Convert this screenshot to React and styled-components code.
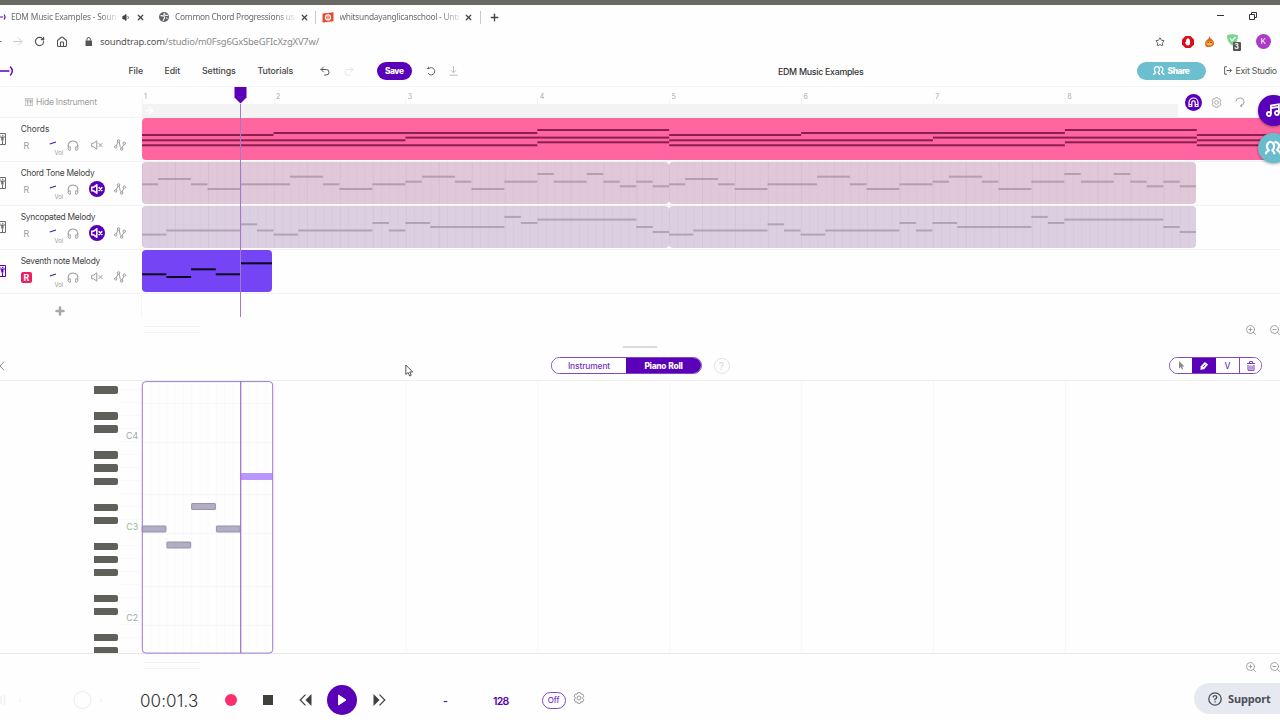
import styled, { createGlobalStyle } from 'styled-components';
import { Home, RotateCw, Volume1, Undo2, Redo2, ZoomIn, ZoomOut, Star, ArrowRight, X, Plus } from 'lucide-react';

const BAR = 131.9;
const PURPLE = '#5a00b8';

const GlobalStyle = createGlobalStyle`
    * {
        box-sizing: border-box;
    }

    body {
        margin: 0;
        background: #fefefe;
        overflow: hidden;
        font-family: Inter, "Liberation Sans", sans-serif;
        color: #3c3c3c;
    }

    svg {
        display: block;
        flex-shrink: 0;
    }
`;

const Page = styled.div`
    position: relative;
    width: 1280px;
    height: 720px;
    overflow: hidden;
    display: flex;
    flex-direction: column;
    background: #fefefe;
`;

const TopStrip = styled.div`
    height: 5px;
    flex-shrink: 0;
    background: #686963;
`;

/* browser chrome */

const TabBar = styled.div`
    display: flex;
    align-items: center;
    height: 24px;
    flex-shrink: 0;
    font-family: "Noto Sans", sans-serif;
    color: #444;
`;

const Cell = styled.div`
    display: flex;
    align-items: center;
    justify-content: ${({ $start }) => ($start ? 'flex-start' : 'center')};
    width: ${({ $w }) => $w}px;
    flex-shrink: 0;
`;

const TabTitle = styled.div`
    width: ${({ $w }) => $w}px;
    flex-shrink: 0;
    overflow: hidden;
    white-space: nowrap;
    font-size: 8.4px;
    line-height: 14px;
    letter-spacing: ${({ $ls }) => $ls || 0}px;
    color: #6c6c6c;
    mask-image: linear-gradient(to right, #000 84%, rgb(0 0 0 / 15%));
`;

const TabDivider = styled.div`
    width: 1px;
    height: 13px;
    background: #c9c9c9;
`;

const WindowButtons = styled.div`
    display: flex;
    align-items: center;
    gap: 25px;
    margin-left: auto;
    padding: 0 23.5px 3px 0;
`;

const AddressBar = styled.div`
    display: flex;
    align-items: center;
    height: 26px;
    flex-shrink: 0;
    padding-bottom: 1px;
    color: #555;
`;

const Url = styled.div`
    font-family: "Noto Sans", sans-serif;
    font-size: 9.4px;
    line-height: 14px;
    letter-spacing: -0.17px;
    color: #8a8a8a;
    margin-left: 5px;

    span {
        color: #555;
    }
`;

const Extensions = styled.div`
    display: flex;
    align-items: center;
    margin-left: auto;
    padding-right: 9.4px;
`;

const Avatar = styled.div`
    width: 15px;
    height: 15px;
    border-radius: 50%;
    background: #ab3ac6;
    color: white;
    font-size: 8px;
    line-height: 15px;
    text-align: center;
`;

const ShieldBox = styled.div`
    position: relative;
    width: 14px;
    height: 15px;

    span {
        position: absolute;
        right: 0;
        bottom: -2px;
        width: 8px;
        height: 9px;
        border-radius: 1px;
        background: #555;
        color: white;
        font-size: 7px;
        line-height: 9px;
        font-weight: 700;
        text-align: center;
    }
`;

/* studio menu */

const MenuBar = styled.div`
    display: flex;
    align-items: center;
    height: 32px;
    flex-shrink: 0;
    border-bottom: 1px solid #f4f4f4;
    font-size: 9px;
`;

const MenuItem = styled.div`
    width: ${({ $w }) => $w}px;
    flex-shrink: 0;
    font-weight: 500;
    font-size: 8.8px;
    letter-spacing: -0.07px;
    white-space: nowrap;
    color: #444;
`;

const Pill = styled.div`
    display: flex;
    align-items: center;
    justify-content: center;
    column-gap: 3px;
    width: ${({ $w }) => $w}px;
    height: 18px;
    flex-shrink: 0;
    border-radius: 9px;
    background: ${({ $bg }) => $bg};
    color: white;
    font-size: 8.4px;
    font-weight: 800;
    letter-spacing: -0.45px;
`;

const SongTitle = styled.div`
    width: 86px;
    margin-left: 320.5px;
    padding-top: 2px;
    font-size: 8.8px;
    font-weight: 500;
    white-space: nowrap;
    letter-spacing: -0.27px;
    color: #333;
`;

const ExitStudio = styled.div`
    display: flex;
    align-items: center;
    column-gap: 4px;
    margin-left: 18px;
    font-size: 8.8px;
    letter-spacing: -0.25px;
    white-space: nowrap;
    color: #555;
`;

/* arrangement */

const RulerRow = styled.div`
    display: flex;
    height: 31px;
    flex-shrink: 0;
    border-bottom: 1px solid #f3f3f3;
`;

const HideInstrument = styled.div`
    display: flex;
    align-items: center;
    column-gap: 3px;
    width: 141.7px;
    flex-shrink: 0;
    padding-left: 25px;
    font-size: 8.6px;
    letter-spacing: -0.26px;
    white-space: nowrap;
    color: #a0a0a0;
`;

const Ruler = styled.div`
    width: 1036.3px;
    flex-shrink: 0;
    overflow: hidden;
`;

const RulerNumbers = styled.div`
    display: flex;
    height: 17px;
`;

const RulerNumber = styled.div`
    width: ${BAR}px;
    flex-shrink: 0;
    padding: 5px 0 0 2.3px;
    font-size: 7px;
    line-height: 10px;
    color: #a9a9a9;
    background: linear-gradient(#f4f4f4, #f4f4f4) 0 100% / 1px 6px no-repeat;
`;

const LoopStrip = styled.div`
    display: flex;
    align-items: center;
    height: 13px;
    padding-left: 2px;
    background: #f3f3f3;
    color: white;
`;

const RulerTools = styled.div`
    display: flex;
    align-items: center;
    padding-left: 4px;
    color: #a5a5a5;
`;

const RoundIcon = styled.div`
    display: flex;
    align-items: center;
    justify-content: center;
    width: ${({ $size }) => $size}px;
    height: ${({ $size }) => $size}px;
    flex-shrink: 0;
    border-radius: 50%;
    background: ${({ $bg }) => $bg || PURPLE};
    color: white;
`;

const Tracks = styled.div`
    display: flex;
    flex-direction: column;
    flex-shrink: 0;
`;

const TrackRow = styled.div`
    display: flex;
    height: 44px;
    border-bottom: 1px solid #f3f3f3;
`;

const TrackHead = styled.div`
    display: flex;
    width: 141.7px;
    flex-shrink: 0;
    color: ${({ $active }) => ($active ? PURPLE : '#6d6d6d')};

    .keys {
        margin: 15px 0 0 -6px;
    }
`;

const TrackBody = styled.div`
    padding: 5px 0 0 8.7px;
`;

const TrackName = styled.div`
    padding-left: 6px;
    font-size: 8.4px;
    line-height: 12px;
    letter-spacing: ${({ $ls }) => $ls}px;
    color: #444;
    white-space: nowrap;
`;

const TrackControls = styled.div`
    display: flex;
    align-items: center;
    height: 20px;
    color: #9a9a9a;
`;

const RecordArm = styled.div`
    width: 11px;
    height: 11px;
    border-radius: 2px;
    font-size: 8.8px;
    line-height: 11px;
    text-align: center;
    font-weight: ${({ $on }) => ($on ? 700 : 400)};
    color: ${({ $on }) => ($on ? 'white' : '#9a9a9a')};
    background: ${({ $on }) => ($on ? '#ea1f60' : 'none')};
`;

const Volume = styled.div`
    display: flex;
    flex-direction: column;
    align-items: flex-end;
    width: 23.5px;
    font-size: 5.8px;
    line-height: 6px;
    color: #999;
    padding-top: 7px;

    span {
        margin: 4.5px -1.5px 0 0;
    }

    svg {
        margin-right: 5px;
    }
`;

const Lane = styled.div`
    display: flex;
    flex: 1;
    min-width: 0;
    overflow: hidden;
`;

const Clip = styled.div`
    width: ${({ $bars }) => $bars * BAR}px;
    height: 42px;
    flex-shrink: 0;
    border-radius: 4px;
    overflow: hidden;
    background: ${({ $bg }) => $bg};
`;

const AddRow = styled.div`
    display: flex;
    height: 24px;
    flex-shrink: 0;
`;

const AddTrack = styled.div`
    display: flex;
    justify-content: center;
    align-items: center;
    width: 142px;
    padding: 9px 20.5px 0 0;
    border-right: 1px solid #f5f5f5;
    color: #a8a8a8;
`;

const ScrollRow = styled.div`
    display: flex;
    align-items: center;
    height: ${({ $h }) => $h}px;
    flex-shrink: 0;
    padding-left: 144px;
    color: #9a9a9a;
`;

const ScrollThumb = styled.div`
    width: 56px;
    height: 7px;
    margin-bottom: 2px;
    border: 1px solid #f3f3f3;
    border-width: 1px 0;
`;

const ZoomGroup = styled.div`
    display: flex;
    column-gap: 12px;
    margin-left: auto;
    margin-right: -1px;
`;

const Playhead = styled.div`
    position: absolute;
    left: 234.2px;
    top: 87px;
    width: 13px;
    height: 231px;

    .line {
        width: 1.4px;
        height: 213px;
        margin: -0.5px auto 0;
        background: #a27acb;
    }
`;

const Floating = styled.div`
    position: absolute;
    left: 1258px;
    top: 95px;
    display: flex;
    flex-direction: column;
    row-gap: 7px;
`;

const FloatButton = styled(RoundIcon)`
    box-shadow: 0 1px 3px rgb(0 0 0 / 35%);
`;

/* editor */

const HandleRow = styled.div`
    display: flex;
    justify-content: center;
    height: 14px;
    flex-shrink: 0;
    padding-top: 4px;

    div {
        width: 34px;
        height: 2px;
        background: #dadada;
    }
`;

const EditorBar = styled.div`
    display: flex;
    align-items: center;
    height: 25px;
    flex-shrink: 0;
    padding-bottom: 5px;
    border-bottom: 1px solid #eeeeee;
`;

const Segmented = styled.div`
    display: flex;
    height: 17px;
    margin-left: ${({ $ml }) => $ml}px;
    border: 1px solid #8047c0;
    border-radius: 9px;
    overflow: hidden;
`;

const Segment = styled.div`
    display: flex;
    align-items: center;
    justify-content: center;
    width: ${({ $w }) => $w}px;
    font-size: 8.4px;
    letter-spacing: ${({ $on }) => ($on ? -0.3 : -0.1)}px;
    word-spacing: ${({ $on }) => ($on ? 0.6 : 0)}px;
    font-weight: ${({ $on }) => ($on ? 800 : 500)};
    color: ${({ $on }) => ($on ? 'white' : '#7234ba')};
    background: ${({ $on }) => ($on ? PURPLE : 'white')};
    border-left: ${({ $line }) => ($line ? '1px solid #8047c0' : 0)};
`;

const HelpMark = styled.div`
    width: 16px;
    height: 16px;
    margin-left: 11.5px;
    border: 1px solid #e3e3e3;
    border-radius: 50%;
    font-size: 10px;
    line-height: 14px;
    text-align: center;
    color: #d9d9d9;
`;

const PianoRoll = styled.div`
    display: flex;
    height: 273px;
    flex-shrink: 0;
    padding-left: 94px;
    border-bottom: 1px solid #e8e8e8;
`;

const BlackKeys = styled.div`
    display: flex;
    flex-direction: column;
    width: 23.5px;
    padding-top: 2.8px;
    overflow: hidden;
`;

const KeySlot = styled.div`
    height: 13.03px;
    padding: 2.6px 0;
    flex-shrink: 0;

    &::before {
        content: '';
        display: ${({ $black }) => ($black ? 'block' : 'none')};
        height: 7.8px;
        border-radius: 0 2px 2px 0;
        background: #60605b;
    }
`;

const OctaveLabels = styled.div`
    width: 24.2px;
    padding-top: 9.6px;
    overflow: hidden;
    background: repeating-linear-gradient(#0000 0 8px, #f9f9f7 8px 9px, #0000 9px 13.03px);
`;

const OctaveLabel = styled.div`
    height: 91.3px;
    padding-right: 3.7px;
    text-align: right;
    font-size: 8.7px;
    line-height: 91.3px;
    color: ${({ $on }) => ($on ? '#8cc08c' : '#a5a5a5')};
`;

const RollGrid = styled.div`
    flex: 1;
    min-width: 0;
`;

/* transport */

const Transport = styled.div`
    display: flex;
    align-items: center;
    height: 42px;
    flex-shrink: 0;
    color: #3f3f3f;
`;

const Time = styled.div`
    width: 74px;
    padding-top: 1px;
    font-size: 17px;
    font-weight: 300;
    letter-spacing: 0.1px;
    color: #333;
`;

const Tempo = styled.div`
    padding-top: 2px;
    font-size: 10.5px;
    font-weight: 600;
    letter-spacing: -0.75px;
    color: ${PURPLE};
`;

const OffPill = styled.div`
    width: 24px;
    height: 17px;
    border: 1px solid #8047c0;
    border-radius: 9px;
    font-size: 8px;
    line-height: 15px;
    text-align: center;
    color: ${PURPLE};
`;

const Support = styled.div`
    position: absolute;
    left: 1194px;
    top: 683px;
    display: flex;
    align-items: center;
    column-gap: 6px;
    width: 100px;
    height: 31px;
    padding-left: 14px;
    border-radius: 16px;
    background: #e7e9f1;
    color: #4b4d58;
    font-family: "Noto Sans", sans-serif;
    font-size: 11px;
    font-weight: 700;
    letter-spacing: -0.15px;
`;

const Cursor = styled.svg`
    position: absolute;
    left: 405px;
    top: 364px;
`;

/* notes are [start, end, y], in steps of the clip */

const CHORDS = [
    [0, 1, 17], [1, 3, 15], [3, 4, 12],
    [0, 2, 22.3], [2, 4, 19.6],
    [0, 3, 27.3], [3, 4, 24.3],
];
const CHORD_NOTES = [
    ...CHORDS,
    ...CHORDS.map(([a, b, y]) => [a + 4, b + 4, y]),
    [8, 9, 17], [8, 9, 22.3], [8, 9, 27.3],
];

const MELODY_NOTES = [
    [0, 1, 22.3], [1, 3, 17], [3, 4, 22.3], [4, 6, 27], [6, 9, 22.3], [9, 11, 14.7], [11, 12, 22.3], [12, 14, 27],
    [14, 16, 22.3], [16, 17, 19.7], [17, 19, 14.7], [19, 20, 19.7], [20, 22, 27], [22, 24, 19.7], [24, 25, 12],
    [25, 27, 19.7], [27, 28, 12], [28, 29, 19.7], [29, 30, 24.3], [30, 31, 19.7], [31, 32, 24.3],
];

const SYNCOPATED_NOTES = [
    [0, 3, 28.6], [3, 12, 24.5], [12, 14, 18.3], [14, 16, 24.5], [16, 19, 28.6], [19, 28, 24.5], [28, 30, 17],
    [30, 32, 24.5], [32, 35, 17], [35, 44, 21], [44, 46, 10.9], [46, 48, 17], [48, 60, 13.6], [60, 62, 21], [62, 64, 26],
];

const SEVENTH_NOTES = [[0, 3, 24.3], [3, 6, 27], [6, 9, 19.3], [9, 12, 24.3], [12, 16, 13.3]];

const ROLL_NOTES = [[0, 3, 145], [3, 6, 161], [6, 9, 122.5], [9, 12, 145]];

const TRACKS = [
    {
        name: 'Chords',
        ls: 0,
        clips: [{ bars: 9, bg: '#ff669f', notes: CHORD_NOTES, steps: 1, color: '#8a1f50' }],
    },
    {
        name: 'Chord Tone Melody',
        ls: -0.25,
        muted: true,
        clips: [4, 3.99].map((bars) => ({ bars, bg: '#e1c8d9', notes: MELODY_NOTES, steps: 8, color: '#b3a0ae', grid: true })),
    },
    {
        name: 'Syncopated Melody',
        ls: -0.27,
        muted: true,
        clips: [4, 3.99].map((bars) => ({ bars, bg: '#ddcfe2', notes: SYNCOPATED_NOTES, steps: 16, color: '#b0a4b6', grid: true })),
    },
    {
        name: 'Seventh note Melody',
        ls: -0.23,
        active: true,
        clips: [{ bars: 0.988, bg: '#7444f5', notes: SEVENTH_NOTES, steps: 16, color: '#0d0620' }],
    },
];

const BLACK_KEYS = '101101110110111011011'.split('');

const range = (n) => Array.from({ length: n }, (_, i) => i);

const ClipNotes = ({ bars, notes, steps, color, grid }) => (
    <svg width={bars * BAR} height="42">
        {grid && range(64).map((i) => (
            <rect key={i} x={(i * BAR) / 16} y="0" width="1" height="42" fill="#6d4a7c" opacity={i % 4 === 0 ? 0.07 : 0.03} />
        ))}
        {notes.map(([a, b, y], i) => (
            <rect key={i} x={(a * BAR) / steps - 0.4} y={y - 1} width={((b - a) * BAR) / steps} height="2" fill={color} />
        ))}
    </svg>
);

const KeysIcon = ({ size = 12, className }) => (
    <svg className={className} width={size} height={size} viewBox="0 0 12 12" fill="none" stroke="currentColor" strokeWidth="1">
        <path d="M.5 .5h11v11H.5zM.5 4h11M2 2.300h1.500M5 2.300h1.500M8 2.300h1.500M4 7.500V11M8.500 7.500V11" />
        <path d="M3.200 4h1.700v4H3.200zM7.200 4h2.300v3.600H7.200z" fill="currentColor" stroke="none" />
    </svg>
);

const MuteIcon = ({ bold }) => (
    <svg width="12" height="10" viewBox="0 0 12 10" fill="none" stroke="currentColor" strokeWidth={bold ? 1.6 : 1} strokeLinejoin="round">
        <path d="M.7 3.2h2L5.8.8v8.4L2.7 6.8h-2zM7.6 3.2l3.7 3.7M11.3 3.2L7.6 6.9" />
    </svg>
);

const HeadphonesIcon = () => (
    <svg width="12" height="11" viewBox="0 0 12 11" fill="none" stroke="currentColor" strokeWidth="1.100">
        <path d="M1.300 7.500C.6 3.500 2.500 1 6 1s5.400 2.500 4.700 6.500" />
        <path d="M3.300 6.800v3.400H2.100L1 8.800l.4-1.600zM8.700 6.800v3.400h1.200L11 8.800l-.4-1.600z" strokeWidth="0.900" />
    </svg>
);

const AutomationIcon = () => (
    <svg width="12" height="12" viewBox="0 0 12 12" fill="none" stroke="currentColor" strokeWidth="1">
        <path d="M2.300 6.800L4 3M5.200 3l1 4.600q.5 1.200 1.200 1M8.100 8.900l1.700-3.600" />
        <circle cx="1.700" cy="7.800" r="1.200" />
        <circle cx="4.600" cy="1.900" r="1.200" />
        <circle cx="7.700" cy="10" r="1.200" />
        <circle cx="10.300" cy="4.200" r="1.200" />
    </svg>
);

const GearIcon = ({ size = 11 }) => (
    <svg width={size} height={size} viewBox="0 0 12 12" fill="none" stroke="currentColor" strokeWidth="1">
        <path d="M4.700 .7h2.600l.6 1.500 1.600-.2 1.300 2.200-1 1.300v1l1 1.300-1.300 2.200-1.600-.2-.6 1.500H4.700l-.6-1.500-1.600.2L1.200 7.800l1-1.300v-1l-1-1.300L2.500 2l1.600.2z" />
        <circle cx="6" cy="6" r="2" />
    </svg>
);

const PeopleIcon = ({ size = 12, stroke = 1.5 }) => (
    <svg width={size} height={size * 0.8} viewBox="0 0 15 12" fill="none" stroke="currentColor" strokeWidth={stroke} strokeLinejoin="round">
        <path d="M.9 11.600V10.300L3.400 8.200C.8 6 1.500 .9 4.900 .9s4.100 5.100 1.500 7.300l1.800 2.100v1.300" />
        <path d="M8.300 1.300c3.600-1.500 5.600 3.500 2.400 6.500l2.900 2.500v1.300" />
    </svg>
);

const LogoMark = () => (
    <svg width="14" height="12" viewBox="0 0 14 12" fill="none" stroke={PURPLE} strokeWidth="1.400" strokeLinecap="round">
        <path d="M0 6h9M10.500 2c2.200 2.400 2.200 5.600 0 8" />
    </svg>
);

const Track = ({ name, ls, muted, active, clips }) => (
    <TrackRow>
        <TrackHead $active={active}>
            <KeysIcon className='keys' />
            <TrackBody>
                <TrackName $ls={ls}>{name}</TrackName>
                <TrackControls>
                    <Cell $w={23.5}><RecordArm $on={active}>R</RecordArm></Cell>
                    <Volume>
                        <svg width="8" height="4" viewBox="0 0 8 4"><path d="M.8 3L7 1" stroke="#4a1c9c" strokeWidth="1.200" /></svg>
                        <span>Vol</span>
                    </Volume>
                    <Cell $w={23.5}><HeadphonesIcon /></Cell>
                    <Cell $w={23.5}>
                        {muted ? <RoundIcon $size={16}><MuteIcon bold /></RoundIcon> : <MuteIcon />}
                    </Cell>
                    <Cell $w={23.5}><AutomationIcon /></Cell>
                </TrackControls>
            </TrackBody>
        </TrackHead>
        <Lane>
            {clips.map((clip, i) => (
                <Clip key={i} $bars={clip.bars} $bg={clip.bg}>
                    <ClipNotes {...clip} />
                </Clip>
            ))}
        </Lane>
    </TrackRow>
);

const App = () => {
    return (
        <Page>
            <GlobalStyle />
            <TopStrip />

            <TabBar>
                <Cell $w={11} $start>
                    <svg width="6" height="8" viewBox="0 0 6 8" fill="none" stroke={PURPLE} strokeWidth="1.200"><path d="M0 4h3M4 1.500q2 2.500 0 5" /></svg>
                </Cell>
                <TabTitle $w={106} $ls={-0.2}>EDM Music Examples - Soun</TabTitle>
                <Cell $w={18}><Volume1 size={9} fill="currentColor" /></Cell>
                <Cell $w={10}><X size={9} strokeWidth={3.2} /></Cell>
                <Cell $w={30}>
                    <svg width="10" height="10" viewBox="0 0 10 10" style={{ marginLeft: 8 }}>
                        <circle cx="5" cy="5" r="5" fill="#5f6368" />
                        <path d="M1.500 3.600L5 4l.6 1.800L4 8.800M5.500 1l-.6 1.600 2.300.9 1.800-.3M7 6l1.600.3" fill="none" stroke="white" strokeWidth="1.100" />
                    </svg>
                </Cell>
                <TabTitle $w={120} $ls={-0.27}>Common Chord Progressions use</TabTitle>
                <Cell $w={19}><X size={9} strokeWidth={3.2} /></Cell>
                <Cell $w={1} />
                <TabDivider />
                <Cell $w={23.5}>
                    <svg width="12" height="11" viewBox="0 0 12 11">
                        <path d="M.5 1.500L11.500 .3v9L.5 10.500z" fill="#e8492f" />
                        <circle cx="6" cy="5.400" r="2.500" fill="none" stroke="white" strokeWidth="1.300" />
                        <path d="M6 4v3" stroke="white" />
                    </svg>
                </Cell>
                <TabTitle $w={120} $ls={-0.27}>whitsundayanglicanschool - Unti</TabTitle>
                <Cell $w={18}><X size={9} strokeWidth={3.2} /></Cell>
                <Cell $w={2} />
                <TabDivider />
                <Cell $w={28}><Plus size={11} strokeWidth={3} /></Cell>
                <WindowButtons>
                    <svg width="7" height="9"><path d="M0 4.500h7" stroke="#333" /></svg>
                    <svg width="8" height="8" fill="none" stroke="#333"><path d="M.5 2.500h5v5h-5zM2.500 2V.5h5v5H6" /></svg>
                </WindowButtons>
            </TabBar>

            <AddressBar>
                <Cell $w={29}>
                    <svg width="29" height="11"><path d="M0 5.500h1.500" stroke="#777" /><path d="M13 5.500h9M18 1.500l4 4-4 4" fill="none" stroke="#ccc" /></svg>
                </Cell>
                <Cell $w={21}><RotateCw size={11} strokeWidth={2.6} /></Cell>
                <Cell $w={24}><Home size={12} strokeWidth={2.2} /></Cell>
                <Cell $w={21}>
                    <svg width="11" height="9" viewBox="0 0 11 9" style={{ marginLeft: 8 }}>
                        <path d="M2.500 3.500h6.500V9H2.500z" fill="#555" />
                        <path d="M4 3.500V2.200a1.700 1.700 0 0 1 3.400 0v1.300" fill="none" stroke="#555" strokeWidth="1" />
                    </svg>
                </Cell>
                <Url><span>soundtrap.com</span>/studio/m0Fsg6GxSbeGFIcXzgXV7w/</Url>
                <Extensions>
                    <Cell $w={25}><Star size={10} strokeWidth={2.2} /></Cell>
                    <Cell $w={30}>
                        <svg width="12" height="12" viewBox="0 0 12 12">
                            <path d="M3.500 0h5L12 3.500v5L8.500 12h-5L0 8.500v-5z" fill="#d80f1e" />
                            <path d="M4 6V3.500h1V2.500h2v1h1V7q0 2.500-2 2.500T3 6.500z" fill="white" />
                        </svg>
                    </Cell>
                    <Cell $w={14}>
                        <svg width="9" height="11" viewBox="0 0 9 11">
                            <path d="M4.500 0Q5 2 7 3.500q2 1.500 2 4T4.500 11 0 7.500q0-2.500 2.500-4Q4.500 2 4.500 0z" fill="#e2611c" />
                            <path d="M1.500 5.500h6v3q-3 2-6 0z" fill="#f7b83c" />
                            <path d="M2.500 6.500h1.200M5.300 6.500h1.200" stroke="#4c2510" />
                        </svg>
                    </Cell>
                    <Cell $w={34}>
                        <ShieldBox>
                            <svg width="11" height="12" viewBox="0 0 11 12">
                                <path d="M0 1.200Q5.500-.8 11 1.200 11 8.500 5.500 11.500 0 8.500 0 1.200z" fill="#78d68a" />
                                <path d="M3 4l2 3 3.500-4" fill="none" stroke="white" strokeWidth="1.200" />
                            </svg>
                            <span>3</span>
                        </ShieldBox>
                    </Cell>
                    <Cell $w={5} />
                    <Avatar>K</Avatar>
                </Extensions>
            </AddressBar>

            <MenuBar>
                <Cell $w={128.5} $start><LogoMark /></Cell>
                <MenuItem $w={36}>File</MenuItem>
                <MenuItem $w={37.5}>Edit</MenuItem>
                <MenuItem $w={55.5}>Settings</MenuItem>
                <MenuItem $w={61}>Tutorials</MenuItem>
                <Cell $w={13}><Undo2 size={12} strokeWidth={2} color="#555" /></Cell>
                <Cell $w={34}><Redo2 size={12} strokeWidth={1.5} color="#ddd" /></Cell>
                <Cell $w={11.5} />
                <Pill $w={34.5} $bg={PURPLE}>Save</Pill>
                <Cell $w={38}>
                    <svg width="10" height="10" viewBox="0 0 10 10" fill="none" stroke="#666" strokeWidth="1">
                        <path d="M3 2.400A3.600 3.600 0 1 1 2 7M.8 2.400h2.400M2.500.8v2" />
                    </svg>
                </Cell>
                <Cell $w={8}>
                    <svg width="9" height="10" viewBox="0 0 9 10" fill="none" stroke="#bbb" strokeWidth="1">
                        <path d="M4.500 0v6.500M2 4.300l2.500 2.500L7 4.300M.5 9.200h8" />
                    </svg>
                </Cell>
                <SongTitle>EDM Music Examples</SongTitle>
                <Cell $w={272.5} />
                <Pill $w={69} $bg='#6bbfce'><PeopleIcon size={12} stroke={1.6} />Share</Pill>
                <ExitStudio>
                    <svg width="8" height="9" viewBox="0 0 8 9" fill="none" stroke="#666" strokeWidth="1">
                        <path d="M3 .8H.6v7.400H3M2.500 4.500h5M5.500 2.500l2 2-2 2" />
                    </svg>
                    Exit Studio
                </ExitStudio>
            </MenuBar>

            <RulerRow>
                <HideInstrument><KeysIcon size={8} />Hide Instrument</HideInstrument>
                <Ruler>
                    <RulerNumbers>
                        {range(8).map((i) => <RulerNumber key={i}>{i + 1}</RulerNumber>)}
                    </RulerNumbers>
                    <LoopStrip><ArrowRight size={11} strokeWidth={3} /></LoopStrip>
                </Ruler>
                <RulerTools>
                    <Cell $w={23}>
                        <RoundIcon $size={17}>
                            <svg width="11" height="11" viewBox="0 0 11 11" fill="none" stroke="white" strokeWidth="1.200">
                                <path d="M1 9.500V5.500a4.500 4.500 0 0 1 9 0v4H7.200V5.500a1.700 1.700 0 0 0-3.400 0v4zM1 7.500h2.800M7.200 7.500H10" />
                            </svg>
                        </RoundIcon>
                    </Cell>
                    <Cell $w={24}><GearIcon /></Cell>
                    <Cell $w={22}>
                        <svg width="10" height="10" viewBox="0 0 10 10" fill="none" stroke="currentColor" strokeWidth="1">
                            <path d="M1 4.500A4 4 0 1 1 5.500 8.800M7.300 7L5.300 8.800l2 1.200" />
                        </svg>
                    </Cell>
                </RulerTools>
            </RulerRow>

            <Tracks>
                {TRACKS.map((track) => <Track key={track.name} {...track} />)}
            </Tracks>

            <AddRow>
                <AddTrack><Plus size={12} strokeWidth={5} /></AddTrack>
            </AddRow>

            <ScrollRow $h={24}>
                <ScrollThumb />
                <ZoomGroup><ZoomIn size={12} strokeWidth={1.8} /><ZoomOut size={12} strokeWidth={1.8} /></ZoomGroup>
            </ScrollRow>

            <HandleRow><div /></HandleRow>

            <EditorBar>
                <Cell $w={6} $start>
                    <svg width="5" height="10" fill="none" stroke="#888"><path d="M4 .8L0 5l4 4.200" /></svg>
                </Cell>
                <Segmented $ml={545}>
                    <Segment $w={74}>Instrument</Segment>
                    <Segment $w={75} $on>Piano Roll</Segment>
                </Segmented>
                <HelpMark>?</HelpMark>
                <Segmented $ml={439.5}>
                    <Segment $w={22}>
                        <svg width="7" height="9" viewBox="0 0 7 9"><path d="M1 0v7.500l1.800-1.600L4 8.600l1.200-.5L4 5.500h2.500z" fill="#888" /></svg>
                    </Segment>
                    <Segment $w={24} $on>
                        <svg width="10" height="10" viewBox="0 0 10 10">
                            <path d="M1.300 8.800l.5-3.500L5.800 .9l3.300 2.500-4 4.800z" fill="white" />
                            <path d="M4.300 6l2-2.500" stroke={PURPLE} strokeWidth="0.900" />
                        </svg>
                    </Segment>
                    <Segment $w={23}>V</Segment>
                    <Segment $w={22} $line>
                        <svg width="8" height="10" viewBox="0 0 8 10" fill="none" stroke="currentColor" strokeWidth="1">
                            <path d="M0 2.500h8M2.500 2.300V.6h3v1.700M1 4v5.300h6V4M3 4.500v4M5 4.500v4" />
                        </svg>
                    </Segment>
                </Segmented>
            </EditorBar>

            <PianoRoll>
                <BlackKeys>
                    {BLACK_KEYS.map((k, i) => <KeySlot key={i} $black={k === '1'} />)}
                </BlackKeys>
                <OctaveLabels>
                    <OctaveLabel>C4</OctaveLabel>
                    <OctaveLabel $on>C3</OctaveLabel>
                    <OctaveLabel>C2</OctaveLabel>
                </OctaveLabels>
                <RollGrid>
                    <svg width="1138" height="273" viewBox="0.300 0 1138 273" overflow="visible">
                        {range(8).map((i) => <rect key={i} x={i * BAR} y="0" width="1" height="272" fill="#f7f7f7" />)}
                        {range(16).map((i) => <rect key={i} x={(i * BAR) / 16} y="0" width="1" height="272" fill="#fafafa" />)}
                        {[22, 61, 113, 152, 205, 244].map((y) => <rect key={y} x="0" y={y} width="131" height="1" fill="#f7f7f7" />)}
                        {ROLL_NOTES.map(([a, b, y], i) => (
                            <rect key={i} x={(a * BAR) / 16 + 0.5} y={y} width={((b - a) * BAR) / 16 - 1} height="6" rx="0.500" fill="#b2adc3" stroke="#9791aa" />
                        ))}
                        <rect x="99" y="92" width="32" height="7" fill="#b996fb" />
                        <rect x="0.600" y="0.600" width="130.400" height="271.500" rx="3.500" fill="none" stroke="#9c7bd0" strokeWidth="1" />
                        <path d="M99 0v272" stroke="#9b70c9" strokeWidth="1.200" />
                    </svg>
                </RollGrid>
            </PianoRoll>

            <ScrollRow $h={25}>
                <ScrollThumb />
                <ZoomGroup><ZoomIn size={12} strokeWidth={1.8} /><ZoomOut size={12} strokeWidth={1.8} /></ZoomGroup>
            </ScrollRow>

            <Transport>
                <Cell $w={140} $start>
                    <svg width="110" height="20" fill="none" stroke="#ebebeb">
                        <path d="M1 6v8M4 5q2 5 0 10M20 9v3M101 9v3" />
                        <circle cx="82.500" cy="10" r="8.500" />
                    </svg>
                </Cell>
                <Time>00:01.3</Time>
                <Cell $w={34}><RoundIcon $size={12.5} $bg='#fb2f6b' /></Cell>
                <Cell $w={40}><svg width="10" height="10"><rect width="10" height="10" fill="#3f403c" /></svg></Cell>
                <Cell $w={35}>
                    <svg width="13" height="12" viewBox="0 0 13 12"><path d="M12.500 0v12L6.500 6z" fill="#3f403c" /><path d="M6.500 .6L1.200 6l5.300 5.400" fill="none" stroke="#3f403c" strokeWidth="1.200" /></svg>
                </Cell>
                <Cell $w={38}>
                    <RoundIcon $size={30}>
                        <svg width="10" height="12" viewBox="0 0 10 12"><path d="M1.500 1l7.500 5-7.500 5z" fill="white" stroke="white" strokeLinejoin="round" /></svg>
                    </RoundIcon>
                </Cell>
                <Cell $w={36}>
                    <svg width="13" height="12" viewBox="0 0 13 12"><path d="M.5 0v12l6-6z" fill="#3f403c" /><path d="M6.500 .6L11.800 6l-5.300 5.400" fill="none" stroke="#3f403c" strokeWidth="1.200" /></svg>
                </Cell>
                <Cell $w={96}><Tempo>-</Tempo></Cell>
                <Cell $w={36.5} $start><Tempo>128</Tempo></Cell>
                <Cell $w={48}><OffPill>Off</OffPill></Cell>
                <Cell $w={2} style={{ color: '#999', paddingBottom: 5 }}><GearIcon size={12} /></Cell>
            </Transport>

            <Playhead>
                <svg width="13" height="17"><path d="M.5 0h12v10.500l-6 6-6-6z" fill={PURPLE} /></svg>
                <div className='line' />
            </Playhead>

            <Floating>
                <FloatButton $size={30.5}>
                    <svg width="15" height="14" viewBox="0 0 15 14" fill="none" stroke="white" strokeWidth="1.800">
                        <circle cx="2.900" cy="11" r="2" /><circle cx="10.900" cy="10" r="2" />
                        <path d="M4.900 11V2.500l8-1.300V10M4.900 5l8-1.200" />
                    </svg>
                </FloatButton>
                <FloatButton $size={30.5} $bg='#68bccb'><PeopleIcon size={17} stroke={1.9} /></FloatButton>
            </Floating>

            <Cursor width="9" height="13" viewBox="0 0 9 13">
                <path d="M.8 1v9.500l2.300-2 1.500 3.500 1.600-.7-1.500-3.300h3z" fill="white" stroke="#444" strokeWidth="0.900" />
            </Cursor>

            <Support>
                <svg width="14" height="14" viewBox="0 0 14 14" fill="none" stroke="currentColor" strokeWidth="1.300">
                    <circle cx="7" cy="7" r="6.200" />
                    <path d="M5.200 5.600q0-1.900 1.800-1.900t1.800 1.600Q8.800 6.500 7 7.200v1M7 9.300v1.300" />
                </svg>
                Support
            </Support>
        </Page>
    );
};

export default App;
